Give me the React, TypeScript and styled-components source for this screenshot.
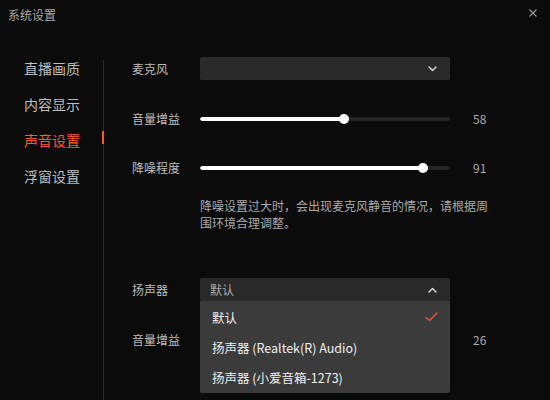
import React from 'react';
import styled, { createGlobalStyle } from 'styled-components';

const Global = createGlobalStyle`
  html, body { margin: 0; padding: 0; background: #0b0b0b; }
  * { box-sizing: border-box; }
`;

const Window = styled.div`
  width: 550px;
  height: 400px;
  background: #0b0b0b;
  overflow: hidden;
  display: flex;
  flex-direction: column;
  font-family: "Noto Sans CJK SC", "Noto Sans", sans-serif;
`;

const TitleBar = styled.div`
  height: 30px;
  flex: none;
  display: flex;
  align-items: center;
  justify-content: space-between;
  padding: 0 13px 0 8px;
`;

const Title = styled.div`
  font-size: 12px;
  line-height: 16px;
  color: #a8a8a8;
`;

const CloseButton = styled.div`
  width: 8px;
  height: 8px;
  display: flex;
  margin-top: -4px;
`;

const Body = styled.div`
  flex: 1;
  display: flex;
  margin-top: 27px;
`;

const Sidebar = styled.nav`
  width: 104px;
  flex: none;
  margin-top: 3px;
  border-right: 1px solid #2c2c2c;
  padding-left: 24px;
`;

const NavList = styled.div`
  margin-top: -2px;
  display: flex;
  flex-direction: column;
  gap: 16px;
`;

const NavItem = styled.div<{ $active?: boolean }>`
  position: relative;
  height: 20px;
  line-height: 20px;
  font-size: 14px;
  color: ${(p) => (p.$active ? '#ff5733' : '#bdbdbd')};
  ${(p) =>
    p.$active &&
    `&::after {
      content: '';
      position: absolute;
      right: -1px;
      top: 1px;
      width: 2px;
      height: 13px;
      background: #ff5733;
    }`}
`;

const Content = styled.div`
  flex: 1;
  padding-left: 28px;
  display: flex;
  flex-direction: column;
`;

const Row = styled.div<{ $mt?: number; $h?: number; $top?: boolean }>`
  display: flex;
  align-items: center;
  height: ${(p) => p.$h ?? 24}px;
  margin-top: ${(p) => p.$mt ?? 0}px;
  position: relative;
  z-index: ${(p) => (p.$top ? 2 : 1)};
`;

const Label = styled.div`
  width: 68px;
  flex: none;
  font-size: 12px;
  line-height: 16px;
  color: #bcbcbc;
`;

const SelectWrap = styled.div`
  position: relative;
  width: 250px;
`;

const SelectBox = styled.div`
  width: 250px;
  height: 23px;
  background: #2a2a2a;
  border-radius: 2px;
  display: flex;
  align-items: center;
  justify-content: space-between;
  padding: 0 13px 0 10px;
  font-size: 12px;
  color: #a9a9a9;
`;

const Menu = styled.div`
  position: absolute;
  top: 100%;
  left: 0;
  width: 250px;
  background: #3b3b3b;
  padding: 1px 0 1px;
  border-radius: 0 0 2px 2px;
`;

const MenuItem = styled.div`
  height: 30px;
  display: flex;
  align-items: center;
  justify-content: space-between;
  padding: 0 12px 0 12px;
  font-size: 12.5px;
  color: #f0f0f0;
`;

const Slider = styled.div`
  position: relative;
  width: 250px;
  height: 24px;
  display: flex;
  align-items: center;
`;

const Track = styled.div`
  width: 100%;
  height: 4px;
  border-radius: 2px;
  background: #252525;
  overflow: hidden;
`;

const Fill = styled.div`
  height: 100%;
  background: #ffffff;
  border-radius: 2px;
`;

const Thumb = styled.div`
  position: absolute;
  top: 50%;
  width: 10px;
  height: 10px;
  margin: -5px 0 0 -5px;
  border-radius: 50%;
  background: #ffffff;
`;

const Value = styled.div`
  margin-left: 23px;
  font-size: 12px;
  line-height: 16px;
  color: #acacac;
`;

const Hint = styled.div`
  margin: 17px 0 0 68px;
  width: 296px;
  font-size: 12px;
  line-height: 17px;
  color: #a9a9a9;
`;

const Chevron = ({ up }: { up?: boolean }) => (
  <svg width="9" height="6" viewBox="0 0 9 6">
    <path
      d={up ? 'M1 5 L4.5 1.5 L8 5' : 'M1 1 L4.5 4.5 L8 1'}
      fill="none"
      stroke="#dcdcdc"
      strokeWidth="1.4"
      strokeLinecap="round"
      strokeLinejoin="round"
    />
  </svg>
);

const Check = () => (
  <svg width="13" height="10" viewBox="0 0 13 10">
    <path d="M1 5.5 L4.5 8.5 L12 1" fill="none" stroke="#e5533b" strokeWidth="1.5" strokeLinecap="round" strokeLinejoin="round" />
  </svg>
);

const RangeSlider = ({ value }: { value: number }) => {
  const pos = 5 + (240 * value) / 100;
  return (
    <Slider>
      <Track>
        <Fill style={{ width: `${pos}px` }} />
      </Track>
      <Thumb style={{ left: `${pos}px` }} />
    </Slider>
  );
};

const navItems = ['直播画质', '内容显示', '声音设置', '浮窗设置'];

export default function App() {
  return (
    <>
      <Global />
      <Window>
        <TitleBar>
          <Title>系统设置</Title>
          <CloseButton>
            <svg width="8" height="8" viewBox="0 0 8 8">
              <path d="M0.5 0.5 L7.5 7.5 M7.5 0.5 L0.5 7.5" stroke="#9a9a9a" strokeWidth="1.2" />
            </svg>
          </CloseButton>
        </TitleBar>
        <Body>
          <Sidebar>
            <NavList>
              {navItems.map((n) => (
                <NavItem key={n} $active={n === '声音设置'}>
                  {n}
                </NavItem>
              ))}
            </NavList>
          </Sidebar>
          <Content>
            <Row $h={23}>
              <Label>麦克风</Label>
              <SelectBox>
                <span />
                <Chevron />
              </SelectBox>
            </Row>
            <Row $mt={27}>
              <Label>音量增益</Label>
              <RangeSlider value={58} />
              <Value>58</Value>
            </Row>
            <Row $mt={25}>
              <Label>降噪程度</Label>
              <RangeSlider value={91} />
              <Value>91</Value>
            </Row>
            <Hint>降噪设置过大时，会出现麦克风静音的情况，请根据周围环境合理调整。</Hint>
            <Row $mt={47} $h={23} $top>
              <Label>扬声器</Label>
              <SelectWrap>
                <SelectBox>
                  <span>默认</span>
                  <Chevron up />
                </SelectBox>
                <Menu>
                  <MenuItem>
                    <span>默认</span>
                    <Check />
                  </MenuItem>
                  <MenuItem>扬声器 (Realtek(R) Audio)</MenuItem>
                  <MenuItem>扬声器 (小爱音箱-1273)</MenuItem>
                </Menu>
              </SelectWrap>
            </Row>
            <Row $mt={27}>
              <Label>音量增益</Label>
              <RangeSlider value={26} />
              <Value>26</Value>
            </Row>
          </Content>
        </Body>
      </Window>
    </>
  );
}
